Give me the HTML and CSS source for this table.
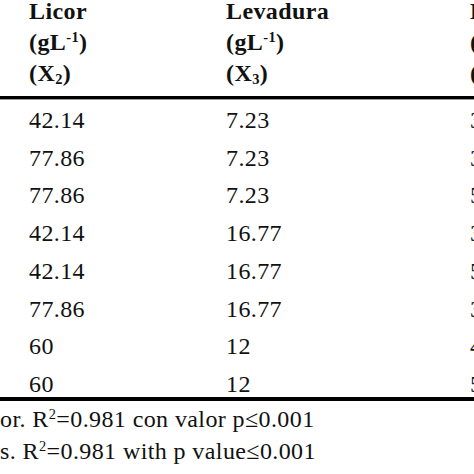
FILE: index.html
```html
<!DOCTYPE html>
<html lang="es">
<head>
<meta charset="utf-8">
<title>Tabla</title>
<link rel="stylesheet" href="styles.css">
</head>
<body>
<div class="page">
  <div class="head">
    <div class="cell">Licor</div>
    <div class="cell">Levadura</div>
    <div class="cell">Etanol</div>
    <div class="cell">(gL<sup>-1</sup>)</div>
    <div class="cell">(gL<sup>-1</sup>)</div>
    <div class="cell">(gL<sup>-1</sup>)</div>
    <div class="cell">(X<sub>2</sub>)</div>
    <div class="cell">(X<sub>3</sub>)</div>
    <div class="cell">(Y)</div>
  </div>
  <div class="rule"></div>
  <div class="body">
    <div class="cell">42.14</div><div class="cell">7.23</div><div class="cell">31.25</div>
    <div class="cell">77.86</div><div class="cell">7.23</div><div class="cell">33.10</div>
    <div class="cell">77.86</div><div class="cell">7.23</div><div class="cell">52.40</div>
    <div class="cell">42.14</div><div class="cell">16.77</div><div class="cell">36.80</div>
    <div class="cell">42.14</div><div class="cell">16.77</div><div class="cell">54.20</div>
    <div class="cell">77.86</div><div class="cell">16.77</div><div class="cell">38.60</div>
    <div class="cell">60</div><div class="cell">12</div><div class="cell">45.90</div>
    <div class="cell">60</div><div class="cell">12</div><div class="cell">50.30</div>
  </div>
  <div class="rule rule-bottom"></div>
  <div class="notes">
    <p class="note">or. R<sup>2</sup>=0.981 con valor p≤0.001</p>
    <p class="note">s. R<sup>2</sup>=0.981 with p value≤0.001</p>
  </div>
</div>
</body>
</html>
```
FILE: styles.css
```css
html, body {
  margin: 0;
  padding: 0;
  background: #ffffff;
}
body {
  width: 474px;
  height: 474px;
  overflow: hidden;
  font-family: "Liberation Serif", "DejaVu Serif", serif;
  font-size: 24px;
  letter-spacing: 0.4px;
  color: #111111;
}
.page {
  width: 474px;
}
.head, .body {
  display: grid;
  grid-template-columns: 197px 244px 120px;
  padding-left: 29px;
  white-space: nowrap;
}
.head {
  font-weight: bold;
  line-height: 31px;
  margin-top: -4px;
  padding-bottom: 7px;
}
.body {
  line-height: 37.7px;
  padding-top: 2px;
  height: 295px;
}
sup {
  font-size: 0.6em;
  vertical-align: 0.55em;
  line-height: 0;
}
sub {
  font-size: 0.6em;
  vertical-align: -0.2em;
  line-height: 0;
}
.rule {
  height: 3px;
  background: #000000;
  border-bottom: 1px solid #9a9a9a;
}
.rule-bottom {
  height: 4px;
  border-bottom: none;
}
.notes {
  padding-top: 2px;
}
.note {
  margin: 0;
  line-height: 32px;
  white-space: nowrap;
}
```
